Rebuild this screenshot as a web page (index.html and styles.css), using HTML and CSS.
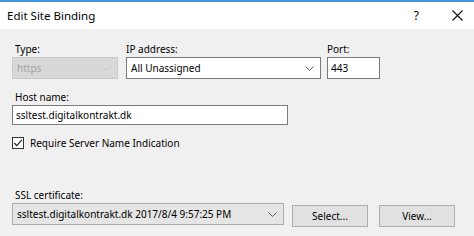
FILE: index.html
```html
<!DOCTYPE html>
<html lang="en">

<head>
    <meta charset="UTF-8">
    <meta name="viewport" content="width=device-width, initial-scale=1.0">
    <title>Edit Site Binding</title>
    <link rel="stylesheet" href="styles.css">
</head>

<body>
    <div class="window">
        <div class="titlebar">
            <span class="title">Edit Site Binding</span>
            <span class="help">?</span>
            <svg class="close" width="11" height="11" viewBox="0 0 11 11">
                <path d="M0.5 0.5 L10.5 10.5 M10.5 0.5 L0.5 10.5" stroke="#111" stroke-width="1.1" fill="none" />
            </svg>
        </div>

        <div class="content">
            <div class="top-row">
                <div class="field type-field">
                    <p class="label">Type:</p>
                    <div class="combo combo-disabled">
                        <span>https</span>
                        <svg class="chevron" width="9" height="5" viewBox="0 0 9 5">
                            <path d="M0.5 0.5 L4.5 4.5 L8.5 0.5" stroke="#c4c4c4" fill="none" />
                        </svg>
                    </div>
                </div>
                <div class="field ip-field">
                    <p class="label">IP address:</p>
                    <div class="combo combo-edit">
                        <span>All Unassigned</span>
                        <svg class="chevron" width="9" height="5" viewBox="0 0 9 5">
                            <path d="M0.5 0.5 L4.5 4.5 L8.5 0.5" stroke="#606060" fill="none" />
                        </svg>
                    </div>
                </div>
                <div class="field port-field">
                    <p class="label">Port:</p>
                    <div class="textbox">443</div>
                </div>
            </div>

            <div class="field host-field">
                <p class="label">Host name:</p>
                <div class="textbox">ssltest.digitalkontrakt.dk</div>
            </div>

            <div class="check-row">
                <span class="checkbox">
                    <svg width="10" height="10" viewBox="0 0 10 10">
                        <path d="M1.2 5 L3.8 7.6 L8.8 1.8" stroke="#222" stroke-width="1.2" fill="none" />
                    </svg>
                </span>
                <span>Require Server Name Indication</span>
            </div>

            <div class="field ssl-field">
                <p class="label">SSL certificate:</p>
                <div class="ssl-row">
                    <div class="combo combo-list">
                        <span>ssltest.digitalkontrakt.dk 2017/8/4 9:57:25 PM</span>
                        <svg class="chevron" width="9" height="5" viewBox="0 0 9 5">
                            <path d="M0.5 0.5 L4.5 4.5 L8.5 0.5" stroke="#606060" fill="none" />
                        </svg>
                    </div>
                    <button class="btn">Select...</button>
                    <button class="btn">View...</button>
                </div>
            </div>
        </div>
    </div>
</body>

</html>
```

FILE: styles.css
```css
* {
    margin: 0;
    padding: 0;
    box-sizing: border-box;
}

body {
    width: 474px;
    height: 236px;
    overflow: hidden;
    font-family: "Noto Sans", "Open Sans", sans-serif;
    font-size: 10px;
    color: #000;
    background-color: #f0f0f0;
}

.window {
    display: flex;
    flex-direction: column;
    height: 236px;
}

.titlebar {
    height: 29px;
    background-color: #fff;
    border-top: 2px solid #3f95dc;
    display: flex;
    align-items: center;
    padding-left: 7px;
}

.title {
    font-size: 11.5px;
    flex: 1;
}

.help {
    font-size: 12px;
    margin-right: 33px;
}

.close {
    margin-right: 11px;
}

.content {
    flex: 1;
    padding: 12px 0 0 12px;
}

.top-row {
    display: flex;
}

.field {
    display: flex;
    flex-direction: column;
}

.label {
    height: 16px;
    line-height: 16px;
    padding-left: 3px;
}

.type-field {
    width: 106px;
    margin-right: 8px;
}

.ip-field {
    width: 195px;
    margin-right: 6px;
}

.ip-field .label,
.port-field .label {
    padding-left: 0;
}

.port-field {
    width: 53px;
}

.combo {
    height: 22px;
    display: flex;
    align-items: center;
    justify-content: space-between;
    padding: 0 6px 0 4px;
    border: 1px solid #adadad;
}

.combo-disabled {
    background-color: #d8d8d8;
    border-color: #cacaca;
    color: #a3a3a3;
}

.combo-edit {
    background-color: #fff;
    border-color: #7a7a7a;
}

.combo-list {
    background-color: #e5e5e5;
    border-color: #acacac;
    width: 272px;
}

.textbox {
    height: 22px;
    line-height: 20px;
    background-color: #fff;
    border: 1px solid #7a7a7a;
    padding-left: 3px;
}

.host-field {
    margin-top: 10px;
    width: 276px;
}

.host-field .textbox {
    height: 20px;
    line-height: 18px;
}

.check-row {
    display: flex;
    align-items: center;
    margin-top: 11px;
    height: 13px;
}

.checkbox {
    width: 12px;
    height: 12px;
    border: 1px solid #333;
    background-color: #fff;
    display: flex;
    align-items: center;
    justify-content: center;
    margin-right: 6px;
}

.ssl-field {
    margin-top: 38px;
}

.ssl-row {
    display: flex;
    align-items: flex-start;
}

.btn {
    font: inherit;
    width: 76px;
    height: 22px;
    margin-top: 2px;
    margin-left: 8px;
    background-color: #e1e1e1;
    border: 1px solid #adadad;
    color: #000;
}

.btn + .btn {
    margin-left: 11px;
}
```
